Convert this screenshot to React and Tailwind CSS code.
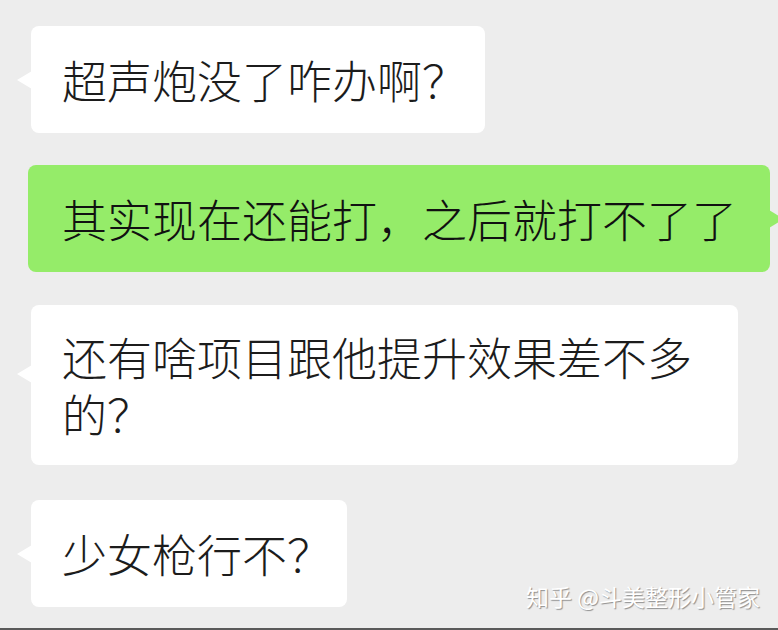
export default function App() {
    const font = { fontFamily: '"Noto Sans CJK SC", "Noto Sans", sans-serif' }
    return (
        <div className="relative w-[778px] h-[630px] bg-[#ededed] overflow-hidden text-[#1c1c1c] font-light" style={font}>
            <div className="flex flex-col pt-[26px]">
                {/* left bubble */}
                <div className="relative ml-[31px] w-[454px] h-[107px] flex items-center pl-[31px] bg-white rounded-[8px] text-[45px] leading-[55px]">
                    <span className="absolute left-[-14px] top-[45px] w-0 h-0 border-y-[9px] border-y-transparent border-r-[15px] border-r-white"></span>
                    超声炮没了咋办啊？
                </div>

                {/* right green bubble */}
                <div className="relative mt-[32px] ml-[28px] w-[742px] h-[107px] flex items-center pl-[34px] bg-[#95ec69] rounded-[8px] text-[45px] leading-[55px] text-[#111]">
                    其实现在还能打，之后就打不了了
                    <span className="absolute right-[-14px] top-[45px] w-0 h-0 border-y-[9px] border-y-transparent border-l-[15px] border-l-[#95ec69]"></span>
                </div>

                <div className="relative mt-[33px] ml-[31px] w-[707px] h-[160px] flex flex-col justify-center pl-[31px] pr-[20px] bg-white rounded-[8px] text-[45px] leading-[57px]">
                    <span className="absolute left-[-14px] top-[60px] w-0 h-0 border-y-[9px] border-y-transparent border-r-[15px] border-r-white"></span>
                    <span>还有啥项目跟他提升效果差不多</span>
                    <span>的？</span>
                </div>

                <div className="relative mt-[35px] ml-[31px] w-[316px] h-[107px] flex items-center pl-[31px] bg-white rounded-[8px] text-[45px] leading-[55px]">
                    <span className="absolute left-[-14px] top-[45px] w-0 h-0 border-y-[9px] border-y-transparent border-r-[15px] border-r-white"></span>
                    少女枪行不？
                </div>
            </div>

            {/* watermark */}
            <div className="absolute left-[526px] top-[581px] text-[23px] leading-[30px] font-normal text-white [text-shadow:1px_1px_1px_rgba(0,0,0,0.4)] whitespace-nowrap">
                知乎 @斗美整形小管家
            </div>

            <div className="absolute left-0 bottom-0 w-full h-[2px] bg-[#5a5a5a]"></div>
        </div>
    )
}
